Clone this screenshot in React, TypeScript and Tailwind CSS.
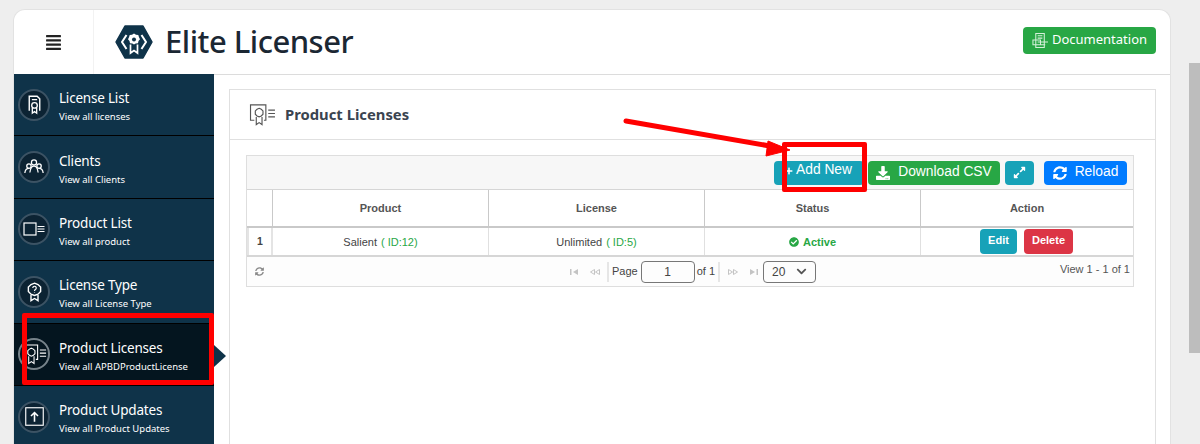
import React from 'react';
import { FaAlignJustify, FaCheckCircle, FaDownload, FaExpandAlt, FaPlus, FaSyncAlt, FaChevronDown } from 'react-icons/fa';

const uiFont = "font-['Noto_Sans','Open_Sans',sans-serif]";

const Ribbon = ({ cx = 12, cy = 11 }: { cx?: number; cy?: number }) => (
  <g fill="none" stroke="currentColor" strokeWidth="1.5">
    <circle cx={cx} cy={cy} r="3.2" />
    <path d={`M${cx - 2.5} ${cy + 3}v6l2.5-2 2.5 2v-6`} />
  </g>
);

const LicenseListIcon = () => (
  <svg viewBox="0 0 24 24" className="w-[21px] h-[21px] text-white">
    <path d="M6 19V2.500h9l3 3V19" fill="none" stroke="currentColor" strokeWidth="1.6" />
    <path d="M9 6.500h6" stroke="currentColor" strokeWidth="1.4" />
    <Ribbon cy={13} />
  </svg>
);

const ClientsIcon = () => (
  <svg viewBox="0 0 24 24" className="w-[22px] h-[22px] text-white" fill="none" stroke="currentColor" strokeWidth="1.4">
    <circle cx="12" cy="7" r="2.800" />
    <circle cx="6.500" cy="11" r="2.400" />
    <circle cx="17.500" cy="11" r="2.400" />
    <path d="M2 18.500c.3-3 2-5 4.500-5M22 18.500c-.3-3-2-5-4.500-5M7.500 18c.5-4.500 2.500-7 4.500-7s4 2.500 4.500 7" />
  </svg>
);

const ProductListIcon = () => (
  <svg viewBox="0 0 24 24" className="w-6 h-6 text-white" fill="none" stroke="currentColor" strokeWidth="1.200">
    <rect x="2" y="6" width="12" height="12" />
    <path d="M15.500 9.500h7M15.500 12h7M15.500 14.500h7" />
  </svg>
);

const LicenseTypeIcon = () => (
  <svg viewBox="0 0 24 24" className="w-[21px] h-[21px] text-white" fill="none" stroke="currentColor" strokeWidth="1.600">
    <path d="M12 2.500l4 1.500 3 3v5l-3 3-4 1.500L8 15l-3-3V7l3-3z" />
    <path d="M10 8a2 2 0 1 1 3 1.800c-.7.4-1 .8-1 1.700M12 13v.6" strokeWidth="1.300" />
    <path d="M8 16v6.500l4-2.500 4 2.500V16" />
  </svg>
);

const ProductLicenseIcon = ({ className }: { className: string }) => (
  <svg viewBox="0 0 28 24" className={className} fill="none" stroke="currentColor" strokeWidth="1.200">
    <path d="M15.500 18h2V2h-16v16h4" />
    <path d="M10.500 5.500l2.200 1 1.800 1.800v3.400l-1.800 1.800-2.200 1-2.200-1-1.800-1.800V8.300l1.800-1.800z" />
    <path d="M7.500 14.500v8l3-2 3 2v-8" />
    <path d="M20 7.500h7M20 11h7M20 14.500h7" />
  </svg>
);

const UpdatesIcon = () => (
  <svg viewBox="0 0 24 24" className="w-[21px] h-[21px] text-white" fill="none" stroke="currentColor" strokeWidth="1.300">
    <rect x="2" y="2" width="20" height="20" />
    <path d="M12 18V8M8 11.500L12 7.500l4 4" strokeWidth="1.800" />
  </svg>
);

const LogoMark = () => (
  <svg viewBox="0 0 38 34" className="w-[38px] h-[34px]">
    <path d="M10 1h18l9 16-9 16H10L1 17z" fill="#0f3349" stroke="#0f3349" strokeLinejoin="round" strokeWidth="1.500" />
    <path d="M11.500 10l-4.500 7 4.500 7M26.500 10l4.500 7-4.500 7" fill="none" stroke="#fff" strokeWidth="2" />
    <path d="M19 8.500l2 1.200 2.300.2.700 2.300 1 2-1.500 1.800-.5 2.300-2.300.2-1.700 1-1.700-1-2.300-.2-.5-2.300-1.500-1.800 1-2 .7-2.300 2.300-.2z" fill="#fff" />
    <circle cx="19" cy="14.500" r="2" fill="#0f3349" />
    <path d="M15.500 19.500v8.500l3.500-2.500 3.500 2.500v-8.500" fill="none" stroke="#fff" strokeWidth="1.700" />
  </svg>
);

const DocIcon = () => (
  <svg viewBox="0 0 18 18" className="w-[17px] h-[17px] text-[#d5f0da]" fill="none" stroke="currentColor" strokeWidth="1.100">
    <path d="M4 1.500h9v15H4zM6 4h5M6 6.500h5M1 8.500h8v5H1zM6 10.500h11M6 13.500h8" />
  </svg>
);

// jqGrid style pager arrows
const PagerArrow = ({ dir, stop }: { dir: 'left' | 'right'; stop?: boolean }) => (
  <svg viewBox="0 0 12 8" className={`w-3 h-2 text-[#c4c4c4] ${dir === 'right' ? 'rotate-180' : ''}`} fill="currentColor">
    {stop ? (
      <>
        <rect x="1" y="1" width="1.500" height="6" />
        <path d="M9 1v6L4 4z" />
      </>
    ) : (
      <>
        <path d="M5.500 1.500v5L1.500 4zM10.500 1.500v5L6.500 4z" fill="none" stroke="currentColor" />
      </>
    )}
  </svg>
);

const navItems = [
  { title: 'License List', sub: 'View all licenses', icon: <LicenseListIcon /> },
  { title: 'Clients', sub: 'View all Clients', icon: <ClientsIcon /> },
  { title: 'Product List', sub: 'View all product', icon: <ProductListIcon /> },
  { title: 'License Type', sub: 'View all License Type', icon: <LicenseTypeIcon /> },
  { title: 'Product Licenses', sub: 'View all APBDProductLicense', icon: <ProductLicenseIcon className="w-[25px] h-[22px] text-white" />, active: true },
  { title: 'Product Updates', sub: 'View all Product Updates', icon: <UpdatesIcon /> },
];

const Sidebar = () => (
  <aside className={`w-[200px] shrink-0 bg-[#0f3349] ${uiFont}`}>
    {navItems.map((item) => (
      <div
        key={item.title}
        className={`relative h-[62.4px] flex items-center pl-1 gap-[9px] border-b border-black ${item.active ? 'bg-[#04151f]' : ''}`}
      >
        <div className={`w-8 h-8 shrink-0 rounded-full border-2 flex items-center justify-center ${item.active ? 'border-[#77838a] bg-[#04151f]' : 'border-[#3c5364] bg-[#0c2333]'}`}>
          {item.icon}
        </div>
        <div className="text-white mt-[4px]">
          <div className="text-[13.5px] leading-[20px] tracking-[-0.2px]">{item.title}</div>
          <div className="text-[9.5px] leading-[16px] mt-[1px]">{item.sub}</div>
        </div>
        {item.active && (
          <div className="absolute left-full top-[21px] w-0 h-0 border-y-[11px] border-y-transparent border-l-[12px] border-l-[#0f3349]" />
        )}
      </div>
    ))}
  </aside>
);

const Toolbar = () => (
  <div className="h-[34px] bg-[#f7f7f7] border-b border-[#d6d6d6] flex items-center justify-end pr-[6px] text-white text-[13.800px]">
    <button className="h-6 w-[90px] rounded bg-[#17a2b8] flex items-center pl-[11px] gap-[3px] pb-[4px]">
      <FaPlus className="w-[8px] h-[8px]" />
      Add New
    </button>
    <button className="ml-1 h-6 w-[132px] rounded bg-[#28a745] flex items-center justify-center gap-2">
      <FaDownload className="w-[14px] h-[14px]" />
      Download CSV
    </button>
    <button className="ml-[5px] h-6 w-[29px] rounded bg-[#17a2b8] flex items-center justify-center">
      <FaExpandAlt className="w-[13px] h-[13px]" />
    </button>
    <button className="ml-[10px] h-6 w-[83px] rounded bg-[#007bff] flex items-center justify-center gap-2">
      <FaSyncAlt className="w-[14px] h-[14px]" />
      Reload
    </button>
  </div>
);

const gridCols = 'grid grid-cols-[26px_216px_216px_216px_1fr]';

const DataTable = () => (
  <div className="ml-[16px] mr-[21px] mt-[15px] border border-[#dedede] font-['Liberation_Sans',sans-serif] text-[11px] text-[#444]">
    <Toolbar />
    <div className={`${gridCols} h-[38px] border-b-2 border-[#c9c9c9] font-bold text-[#555] text-center`}>
      <div className="border-r border-[#c9c9c9]" />
      <div className="border-r border-[#c9c9c9] flex items-center justify-center">Product</div>
      <div className="border-r border-[#c9c9c9] flex items-center justify-center">License</div>
      <div className="border-r border-[#c9c9c9] flex items-center justify-center">Status</div>
      <div className="flex items-center justify-center">Action</div>
    </div>
    <div className={`${gridCols} h-[29px] border-b-2 border-[#d6d6d6] text-center`}>
      <div className="border-r-2 border-l-2 border-[#e4e4e4] flex items-center justify-center font-bold text-[10.500px]">1</div>
      <div className="border-r border-[#e0e0e0] flex items-center justify-center pt-[1px]">
        Salient<span className="text-[#28a745] ml-1">( ID:12)</span>
      </div>
      <div className="border-r border-[#e0e0e0] flex items-center justify-center pt-[1px]">
        Unlimited<span className="text-[#28a745] ml-1">( ID:5)</span>
      </div>
      <div className="border-r border-[#e0e0e0] flex items-center justify-center font-bold text-[#28a745] gap-1 pt-[1px]">
        <FaCheckCircle className="w-[10px] h-[10px]" />
        Active
      </div>
      <div className="flex items-center justify-center gap-[7px] text-white font-bold pr-[1px]">
        <button className="h-[25px] w-[37px] rounded bg-[#17a2b8] pb-[2px]">Edit</button>
        <button className="h-[25px] w-[49px] rounded bg-[#dc3545] pb-[2px]">Delete</button>
      </div>
    </div>
    <div className="h-[29px] bg-[#fdfdfd] flex items-center pl-2 pr-[3px]">
      <FaSyncAlt className="w-[9px] h-[9px] text-[#888]" />
      <div className="ml-[305px] flex items-center gap-[8px]">
        <PagerArrow dir="left" stop />
        <PagerArrow dir="left" />
      </div>
      <div className="ml-[6px] w-[2px] h-5 bg-[#e6e6e6]" />
      <span className="ml-[3px]">Page</span>
      <div className="ml-[3px] w-[54px] h-[22px] border border-[#777] rounded flex items-center justify-center text-[12px]">1</div>
      <span className="ml-[2px]">of 1</span>
      <div className="ml-[3px] w-[2px] h-5 bg-[#e6e6e6]" />
      <div className="ml-[7px] flex items-center gap-[8px]">
        <PagerArrow dir="right" />
        <PagerArrow dir="right" stop />
      </div>
      <div className="ml-[4px] w-[53px] h-[22px] border border-[#777] rounded flex items-center justify-between px-2 text-[12px]">
        20
        <FaChevronDown className="w-[11px] h-[11px] text-[#555]" />
      </div>
      <span className="ml-auto -mt-1 text-[#555]">View 1 - 1 of 1</span>
    </div>
  </div>
);

const App: React.FC = () => (
  <div className="relative h-[444px] w-[1200px] overflow-hidden bg-[#eeeeee]">
    <div className="ml-[13px] mt-[9px] w-[1158px] h-[500px] rounded-t-[12px] border border-[#e2e2e2] border-b-0 bg-white overflow-hidden inline-block align-top">
      <header className={`h-[64px] flex items-center ${uiFont}`}>
        <div className="w-[80px] h-full border-r border-[#f2f2f2] flex items-center justify-center shrink-0">
          <FaAlignJustify className="w-[17px] h-[17px] text-[#222]" />
        </div>
        <div className="ml-[21px]">
          <LogoMark />
        </div>
        <h1 className="ml-[12px] text-[31px] leading-none text-[#1b2733] tracking-[-0.5px] font-medium -mt-[1px]">Elite Licenser</h1>
        <button className="ml-auto mr-[14px] h-[27px] w-[133px] rounded bg-[#28a745] flex items-center justify-center gap-[3px] text-white text-[13px] -mt-[4px]">
          <DocIcon />
          Documentation
        </button>
      </header>
      <div className="flex">
        <Sidebar />
        <main className="flex-1 border-t border-[#dcdcdc] pl-[15px] pr-[14px] pt-[14px]">
          <section className="border border-[#e0e0e0] h-[400px]">
            <div className={`h-[50px] border-b border-[#e0e0e0] flex items-center pl-[19px] gap-[9px] ${uiFont}`}>
              <ProductLicenseIcon className="w-[27px] h-[23px] text-[#555]" />
              <span className="font-bold text-[14.800px] text-[#3a4450]">Product Licenses</span>
            </div>
            <DataTable />
          </section>
        </main>
      </div>
    </div>

    {/* page scrollbar thumb */}
    <div className="absolute right-0 top-[63px] w-[11px] h-[290px] bg-[#bdbdbd]" />

    {/* red annotations drawn over the screenshot */}
    <div className="absolute left-[22px] top-[313px] w-[192px] h-[72px] border-[5px] border-[#ff0000] rounded-[2px]" />
    <div className="absolute left-[782px] top-[142px] w-[85px] h-[50px] border-[5px] border-[#ff0000] rounded-[2px]" />
    <svg className="absolute left-[620px] top-[112px] w-[180px] h-[50px]" viewBox="0 0 180 50">
      <path d="M6 9L150 34" stroke="#ff0000" strokeWidth="5" strokeLinecap="round" />
      <path d="M170 38L146 44L148 29z" fill="#ff0000" stroke="#ff0000" strokeWidth="1" />
    </svg>
  </div>
);

export default App;
